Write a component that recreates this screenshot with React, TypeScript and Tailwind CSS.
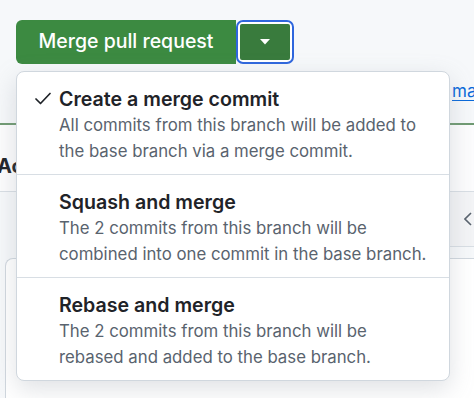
import clsx from "clsx";

const options = [
    {
        title: "Create a merge commit",
        lines: [
            "All commits from this branch will be added to",
            "the base branch via a merge commit.",
        ],
        checked: true,
    },
    {
        title: "Squash and merge",
        lines: [
            "The 2 commits from this branch will be",
            "combined into one commit in the base branch.",
        ],
        checked: false,
    },
    {
        title: "Rebase and merge",
        lines: [
            "The 2 commits from this branch will be",
            "rebased and added to the base branch.",
        ],
        checked: false,
    },
];

const CheckIcon = () => (
    <svg width="16" height="13" viewBox="0 0 16 13" fill="none">
        <path
            d="M1 7 L5.5 11.5 L15 1.5"
            stroke="#1f2328"
            strokeWidth="1.7"
            strokeLinecap="round"
            strokeLinejoin="round"
        />
    </svg>
);

const App = () => {
    return (
        <div className="relative w-[474px] h-[398px] overflow-hidden bg-[#f6f8fa] font-['Inter',sans-serif]">
            {/* merge button group */}
            <div className="flex pt-[20px] pl-[16px]">
                <button className="w-[220px] h-[44px] rounded-l-[6px] bg-[#3c8a41] text-white text-[19.5px] font-medium">
                    Merge pull request
                </button>
                <div className="w-[58px] h-[44px] rounded-[7px] border-[2.5px] border-[#2f66dd] bg-white p-[2px]">
                    <div className="flex h-full items-center justify-center rounded-[2px] bg-[#397b3d]">
                        <svg width="10" height="6" viewBox="0 0 10 6">
                            <path d="M0 0 H10 L5 5.5 Z" fill="white" />
                        </svg>
                    </div>
                </div>
            </div>

            {/* page behind the menu */}
            <div className="h-[59px] pl-[452px] pt-[15px]">
                <span className="whitespace-nowrap text-[17px] text-[#0969da] underline underline-offset-[3px]">
                    main
                </span>
            </div>
            <div className="h-[2px] bg-[#6f9a72]" />
            <div className="h-[67px] border-b border-[#d8dee4] bg-[#fcfcfd] pt-[26px]">
                <span className="ml-[-3px] whitespace-nowrap text-[20px] font-bold text-[#1f2328]">
                    Activity
                </span>
            </div>
            <div className="flex h-[55px]">
                <div className="flex-1" />
                <div className="flex w-[24px] items-center border-b border-[#d8dee4] bg-[#f3f4f6] pl-[14px]">
                    <svg width="8" height="14" viewBox="0 0 8 14" fill="none">
                        <path d="M7 1 L1 7 L7 13" stroke="#59636e" strokeWidth="1.6" />
                    </svg>
                </div>
            </div>
            <div className="ml-[5px] mt-[11px] h-[200px] rounded-tl-[8px] border-l border-t border-[#d0d7de] bg-white" />

            {/* dropdown menu */}
            <div className="absolute left-[16px] top-[71px] w-[434px] rounded-[8px] border border-[#d0d7de] bg-white shadow-[0_8px_24px_rgba(140,149,159,0.28)]">
                {options.map((option, i) => (
                    <div
                        key={option.title}
                        className={clsx(
                            "flex pl-[18px] pt-[14px] pb-[10px]",
                            i > 0 && "border-t border-[#d8dee4]"
                        )}
                    >
                        <div className="w-[24px] pt-[6px]">
                            {option.checked && <CheckIcon />}
                        </div>
                        <div>
                            <div className="text-[19.6px] font-semibold leading-[26px] text-[#1f2328]">
                                {option.title}
                            </div>
                            {option.lines.map((line) => (
                                <div
                                    key={line}
                                    className="whitespace-nowrap text-[16.8px] leading-[26px] text-[#59636e]"
                                >
                                    {line}
                                </div>
                            ))}
                        </div>
                    </div>
                ))}
            </div>
        </div>
    );
};

export default App;
